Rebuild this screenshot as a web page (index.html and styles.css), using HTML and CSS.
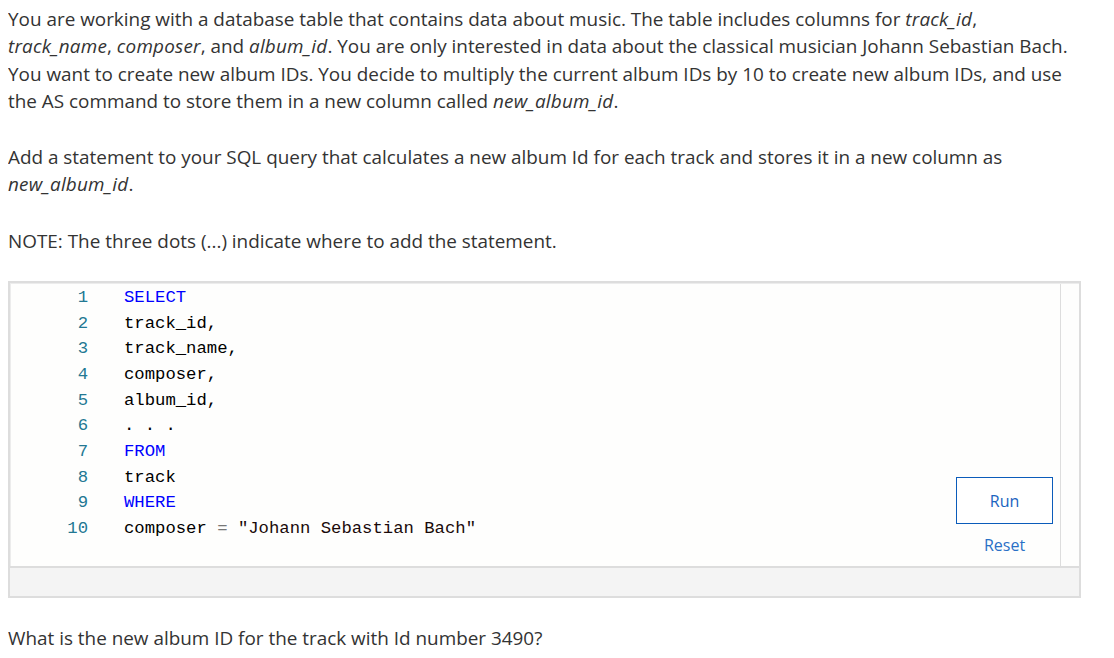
FILE: index.html
```html
<!DOCTYPE html>
<html>
<head>
<meta charset="utf-8">
<link rel="stylesheet" href="styles.css">
</head>
<body>
<p class="para">You are working with a database table that contains data about music. The table includes columns for <em>track_id</em>,<br><em>track_name</em>, <em>composer</em>, and <em>album_id</em>. You are only interested in data about the classical musician Johann Sebastian Bach. You want to create new album IDs. You decide to multiply the current album IDs by 10 to create new album IDs, and use the AS command to store them in a new column called <em>new_album_id</em>.</p>
<p class="para">Add a statement to your SQL query that calculates a new album Id for each track and stores it in a new column as <em>new_album_id</em>.</p>
<p class="para">NOTE: The three dots (...) indicate where to add the statement.</p>
<div class="editor">
  <div class="editor-main">
    <div class="code-area">
      <div class="gutter">
        <div>1</div><div>2</div><div>3</div><div>4</div><div>5</div><div>6</div><div>7</div><div>8</div><div>9</div><div>10</div>
      </div>
      <div class="code">
        <div class="line"><span class="kw">SELECT</span></div>
        <div class="line">track_id,</div>
        <div class="line">track_name,</div>
        <div class="line">composer,</div>
        <div class="line">album_id,</div>
        <div class="line">. . .</div>
        <div class="line"><span class="kw">FROM</span></div>
        <div class="line">track</div>
        <div class="line"><span class="kw">WHERE</span></div>
        <div class="line">composer <span class="op">=</span> <span class="str">"Johann Sebastian Bach"</span></div>
      </div>
      <div class="actions">
        <button class="run">Run</button>
        <span class="reset">Reset</span>
      </div>
    </div>
    <div class="scroll"></div>
  </div>
  <div class="output"></div>
</div>
<p class="para question">What is the new album ID for the track with Id number 3490?</p>
</body>
</html>
```

FILE: styles.css
```css
body {
  margin: 6px 8px 8px 8px;
  background: #ffffff;
  font-family: "Open Sans", "Liberation Sans", sans-serif;
  font-size: 18.9px;
  color: #333333;
}
.para {
  margin: 0 0 29px 0;
  line-height: 27.3px;
  width: 1077px;
}
.para em {
  font-style: italic;
  letter-spacing: 0.2px;
}
.editor {
  box-sizing: border-box;
  width: 1073px;
  border: 2px solid #dddddd;
  margin-top: -3px;
  margin-bottom: 27px;
}
.editor-main {
  display: flex;
  border-top: 1px solid #ececec;
  border-left: 1px solid #ececec;
  background: #fefefd;
}
.code-area {
  flex: 1;
  display: flex;
  height: 282px;
}
.gutter {
  width: 77px;
  padding-top: 1px;
  text-align: right;
  color: #237893;
  font-family: "Liberation Mono", "DejaVu Sans Mono", monospace;
  font-size: 17.25px;
  line-height: 25.67px;
}
.code {
  flex: 1;
  padding-top: 1px;
  margin-left: 36px;
  font-family: "Liberation Mono", "DejaVu Sans Mono", monospace;
  font-size: 17.25px;
  line-height: 25.67px;
  color: #000000;
}
.line {
  white-space: pre;
}
.kw {
  color: #0000ff;
}
.op {
  color: #777777;
}
.str {
  color: #1a0a0a;
}
.actions {
  display: flex;
  flex-direction: column;
  justify-content: flex-end;
  align-items: center;
  gap: 10px;
  padding: 0 7px 10px 0;
}
.run {
  width: 97px;
  height: 47px;
  border: 1px solid #0b5cba;
  background: #ffffff;
  color: #1b64c0;
  font-family: "Open Sans", "Liberation Sans", sans-serif;
  font-size: 16px;
  padding: 0;
}
.reset {
  color: #2a70c6;
  font-size: 16px;
  line-height: 22px;
}
.scroll {
  width: 18px;
  border-left: 1px solid #dddddd;
}
.output {
  height: 28px;
  background: #f4f4f4;
  border-top: 2px solid #dddddd;
}
.question {
  margin-bottom: 0;
}
```
